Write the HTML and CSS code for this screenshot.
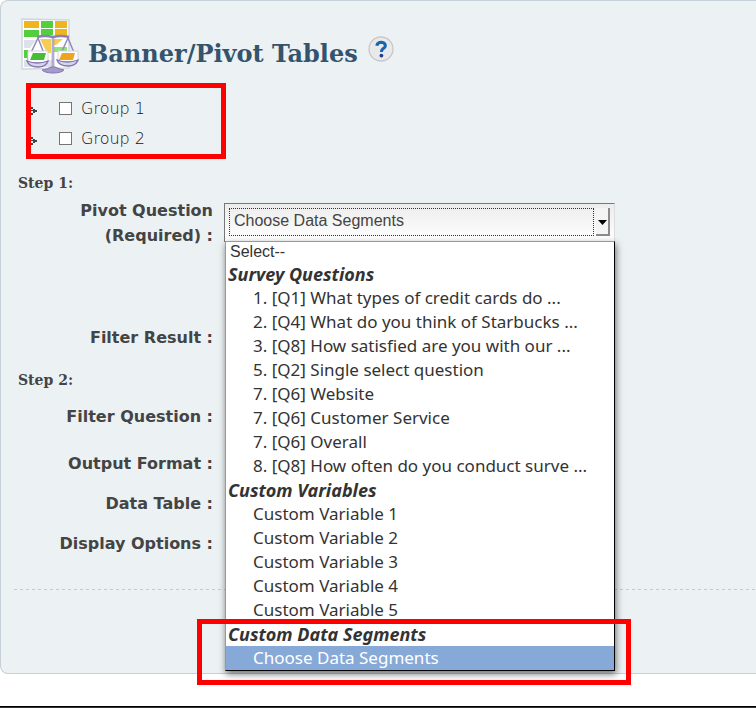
FILE: index.html
```html
<!DOCTYPE html>
<html lang="en">
<head>
<meta charset="utf-8">
<title>Banner/Pivot Tables</title>
<link rel="stylesheet" href="styles.css">
</head>
<body>
<main class="panel">
  <header class="heading">
    <svg class="logo" viewBox="0 0 60 58" aria-hidden="true">
      <path d="M2 2L49 3V51L2 52Z" fill="#fff" stroke="#d3d6de" stroke-width="1.5"/>
      <path d="M4 4H19V11H4ZM35 4H47V11H35ZM35 12H47V19H35Z" fill="#efb51c"/>
      <path d="M21 4H33V11H21ZM21 12H33V18H21ZM4 13H19V20H4ZM4 33H8V41H4Z" fill="#54cf3c"/>
      <path d="M4 23H16L10 31H4ZM4 43H33V50H4Z" fill="#dfe1e8"/>
      <path d="M20 22H31V36H27ZM33 22H43L36 28H33Z" fill="#f5cd55"/>
      <path d="M34 30H47V35H34Z" fill="#8ce579"/>
      <path d="M18 21L7 44M18 21L27 44M48 21L38 43M48 21L57 43" fill="none" stroke="#9389bd" stroke-width="1.5"/>
      <path d="M17 20Q25 18 33 20Q41 18 49 20M33 19V52" fill="none" stroke="#8b80b7" stroke-width="2.5"/>
      <path d="M33 21V51" stroke="#d9d5ef" stroke-width="1"/>
      <path d="M8 34H28V46H8ZM38 34H58V45H38Z" fill="#fff" stroke="#d2d5db"/>
      <path d="M13 36H26L24 43H10Z" fill="#45bd35"/>
      <path d="M42 36H55L53 43H39Z" fill="#f1a51c"/>
      <path d="M7 44Q17 48 28 44Q26 50 18 50Q9 50 7 44ZM37 43Q47 47 58 43Q56 49 48 49Q39 49 37 43Z" fill="#d8d4ec" stroke="#8175ae" stroke-width="1.3"/>
      <path d="M22 53Q28 52 31 50H35Q39 52 44 53Q41 56 33 56Q25 56 22 53Z" fill="#a49acb" stroke="#8578b1"/>
    </svg>
    <h1>Banner/Pivot Tables</h1>
    <button class="help" type="button" aria-label="Help">
      <svg viewBox="0 0 26 26" aria-hidden="true">
        <circle cx="13" cy="13" r="12" fill="#e9e9e9" stroke="#c9c7c7" stroke-width="1.3"/>
        <path d="M8.8 9.7Q9.5 6.3 13.3 6.3Q17.3 6.5 17.3 9.8Q17.2 11.6 15.2 12.7Q13.4 13.7 13.4 16.1" fill="none" stroke="#1267b5" stroke-width="3.1"/>
        <circle cx="13.4" cy="19.6" r="1.9" fill="#233d92"/>
      </svg>
    </button>
  </header>

  <form class="form">
    <ul class="groups">
      <li><svg class="bullet" viewBox="0 0 6 10" aria-hidden="true"><path d="M0 1H2V3H0ZM2 3H4V4H6V6H4V7H2V5H0V4H2ZM0 7H2V9H0Z"/></svg><input type="checkbox" id="g1"><label for="g1">Group 1</label></li>
      <li><svg class="bullet" viewBox="0 0 6 10" aria-hidden="true"><path d="M0 1H2V3H0ZM2 3H4V4H6V6H4V7H2V5H0V4H2ZM0 7H2V9H0Z"/></svg><input type="checkbox" id="g2"><label for="g2">Group 2</label></li>
    </ul>

    <h2>Step 1:</h2>
    <div class="row row-pivot">
      <label for="pivot">Pivot Question (Required) :</label>
      <div class="field">
        <select id="pivot"><option>Choose Data Segments</option></select>
        <svg class="arrow" viewBox="0 0 14 28" aria-hidden="true"><path d="M0 0H14V28H0Z" fill="#f4f4f4"/><path d="M0 27H13V0" fill="none" stroke="#8b8b8b" stroke-width="2"/><path d="M2 12H11L6.500 17Z"/></svg>
        <div class="menu" role="listbox" aria-label="Pivot Question">
          <div class="none" role="option">Select--</div>
          <div role="group" aria-labelledby="sq">
            <div class="caption" id="sq">Survey Questions</div>
            <div class="option" role="option">1. [Q1] What types of credit cards do ...</div>
            <div class="option" role="option">2. [Q4] What do you think of Starbucks ...</div>
            <div class="option" role="option">3. [Q8] How satisfied are you with our ...</div>
            <div class="option" role="option">5. [Q2] Single select question</div>
            <div class="option" role="option">7. [Q6] Website</div>
            <div class="option" role="option">7. [Q6] Customer Service</div>
            <div class="option" role="option">7. [Q6] Overall</div>
            <div class="option" role="option">8. [Q8] How often do you conduct surve ...</div>
          </div>
          <div role="group" aria-labelledby="cv">
            <div class="caption" id="cv">Custom Variables</div>
            <div class="option" role="option">Custom Variable 1</div>
            <div class="option" role="option">Custom Variable 2</div>
            <div class="option" role="option">Custom Variable 3</div>
            <div class="option" role="option">Custom Variable 4</div>
            <div class="option" role="option">Custom Variable 5</div>
          </div>
          <div role="group" aria-labelledby="cd">
            <div class="caption" id="cd">Custom Data Segments</div>
            <div class="option selected" role="option" aria-selected="true">Choose Data Segments</div>
          </div>
          <div class="marker"></div>
        </div>
      </div>
    </div>
    <div class="row row-filter"><span>Filter Result :</span></div>

    <h2>Step 2:</h2>
    <div class="row row-question"><span>Filter Question :</span></div>
    <div class="row"><span>Output Format :</span></div>
    <div class="row"><span>Data Table :</span></div>
    <div class="row"><span>Display Options :</span></div>
    <svg class="divider" aria-hidden="true"><path d="M0 .5H3000"/></svg>
  </form>
</main>
<footer></footer>
</body>
</html>
```
FILE: styles.css
```css
* { box-sizing: border-box; }

body {
  margin: 0;
  background: #fff;
  color: #444;
  font: 16px/24px "DejaVu Sans", sans-serif;
  overflow: hidden;
}

.panel {
  padding: 16px 0 83px 13px;
  background: #ecf1f4;
  border: 1px solid #c5d0d9;
  border-right: 0;
  border-radius: 8px 0 0 8px;
}

.heading {
  display: flex;
  align-items: flex-start;
  padding-left: 6px;
}

.logo { width: 60px; height: 58px; }

h1 {
  margin: 21px 10px 0 8px;
  color: #34536c;
  font: bold 24px/32px "DejaVu Serif", serif;
}

.help {
  width: 26px;
  height: 26px;
  margin-top: 19px;
  padding: 0;
  border: 0;
  background: none;
}

.help svg { display: block; }

.groups {
  width: 200px;
  margin: 8px 0 12px 12px;
  padding: 6px 0 0;
  border: 5px solid #f00;
  list-style: none;
}

.groups li {
  display: flex;
  align-items: center;
  height: 30px;
  color: #111;
  font-weight: 200;
}

.bullet {
  width: 6px;
  height: 10px;
  margin-top: 4px;
  fill: #444;
}

.groups input {
  appearance: none;
  width: 13px;
  height: 13px;
  margin: 0 9px 2px 22px;
  border: 1px solid #77736f;
  background: #fff;
}

h2 {
  margin: 0 0 0 4px;
  font: bold 14px/24px "DejaVu Serif", serif;
}

.row {
  display: grid;
  grid-template-columns: 199px 1fr;
  column-gap: 11px;
  margin-bottom: 15px;
  font-weight: bold;
  line-height: 25px;
  text-align: right;
}

.row-pivot { height: 50px; margin: 3px 0 77px; }
.row-pivot > label { padding-left: 40px; }
.row-filter { margin-bottom: 18px; }
.row-question { margin: 12px 0 22px; }

.field {
  position: relative;
  width: 391px;
  height: 39px;
  margin-top: 5px;
  text-align: left;
  font-weight: normal;
}

.field select {
  appearance: none;
  width: 100%;
  height: 39px;
  padding: 0 9px 4px;
  border: 1px solid #777;
  border-right-color: #ddd;
  border-radius: 0;
  background: linear-gradient(#ececec, #fff);
  color: #444;
  font: 16px "Liberation Sans", sans-serif;
  outline: 0;
}

.field::before {
  content: "";
  position: absolute;
  inset: 5px 21px 6px 5px;
  border: 1px dotted #333;
  pointer-events: none;
}

.arrow {
  position: absolute;
  top: 5px;
  right: 5px;
  width: 14px;
  height: 28px;
  pointer-events: none;
}

.menu {
  position: absolute;
  top: 38px;
  left: 1px;
  right: 0;
  background: #fff;
  border: 1px solid #000;
  border-top-color: #999;
  border-left-color: #999;
  box-shadow: 1px 3px 7px rgba(0, 0, 0, .55);
  color: #333;
  font: 17px/24px "Noto Sans", sans-serif;
  white-space: nowrap;
}

.none {
  padding-left: 4px;
  font: 16px/20px "Liberation Sans", sans-serif;
}

.caption {
  padding-left: 2px;
  font-size: 18px;
  font-weight: bold;
  font-style: italic;
}

.option { padding-left: 27px; }

.selected {
  background: #86a9d8;
  color: #fff;
}

.marker {
  position: absolute;
  height: 66px;
  left: -29px;
  right: -17px;
  bottom: -15px;
  border: 5px solid #f00;
  pointer-events: none;
}

.divider {
  display: block;
  width: 100%;
  height: 1px;
  margin-top: 33px;
  stroke: #c5ccce;
  stroke-dasharray: 3;
}

footer {
  height: 2px;
  margin-top: 32px;
  background: #333;
  border-top: 1px solid #000;
}
```
